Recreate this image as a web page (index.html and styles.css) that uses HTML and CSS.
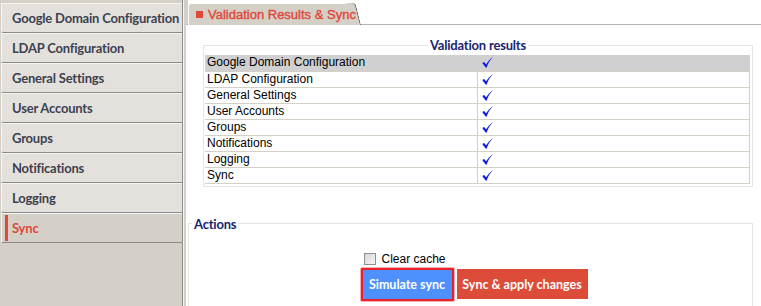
FILE: index.html
```html
<!DOCTYPE html>
<html>
<head>
<meta charset="utf-8">
<link rel="stylesheet" href="styles.css">
</head>
<body>
<div class="app">
  <nav class="sidebar">
    <div class="nav-item">Google Domain Configuration</div>
    <div class="nav-item">LDAP Configuration</div>
    <div class="nav-item">General Settings</div>
    <div class="nav-item">User Accounts</div>
    <div class="nav-item">Groups</div>
    <div class="nav-item">Notifications</div>
    <div class="nav-item">Logging</div>
    <div class="nav-item active">Sync</div>
  </nav>
  <div class="gutter"></div>
  <main class="main">
    <div class="tabstrip">
      <div class="tab"><span class="tab-mark"></span><span class="tab-label">Validation Results &amp; Sync</span></div>
    </div>
    <div class="panel">
      <fieldset class="results">
        <legend>Validation results</legend>
        <table class="results-table">
          <tr class="selected"><td class="name">Google Domain Configuration</td><td class="state"><svg class="check" viewBox="0 0 12 12"><path d="M0.3 6.6 L2.4 5.4 L4.4 8.2 C6.4 4.8 8.6 2.3 11.8 0.2 C8.8 3.3 6.6 6.8 5.1 11.4 L4 11.4 Z"/></svg></td></tr>
          <tr><td class="name">LDAP Configuration</td><td class="state"><svg class="check" viewBox="0 0 12 12"><path d="M0.3 6.6 L2.4 5.4 L4.4 8.2 C6.4 4.8 8.6 2.3 11.8 0.2 C8.8 3.3 6.6 6.8 5.1 11.4 L4 11.4 Z"/></svg></td></tr>
          <tr><td class="name">General Settings</td><td class="state"><svg class="check" viewBox="0 0 12 12"><path d="M0.3 6.6 L2.4 5.4 L4.4 8.2 C6.4 4.8 8.6 2.3 11.8 0.2 C8.8 3.3 6.6 6.8 5.1 11.4 L4 11.4 Z"/></svg></td></tr>
          <tr><td class="name">User Accounts</td><td class="state"><svg class="check" viewBox="0 0 12 12"><path d="M0.3 6.6 L2.4 5.4 L4.4 8.2 C6.4 4.8 8.6 2.3 11.8 0.2 C8.8 3.3 6.6 6.8 5.1 11.4 L4 11.4 Z"/></svg></td></tr>
          <tr><td class="name">Groups</td><td class="state"><svg class="check" viewBox="0 0 12 12"><path d="M0.3 6.6 L2.4 5.4 L4.4 8.2 C6.4 4.8 8.6 2.3 11.8 0.2 C8.8 3.3 6.6 6.8 5.1 11.4 L4 11.4 Z"/></svg></td></tr>
          <tr><td class="name">Notifications</td><td class="state"><svg class="check" viewBox="0 0 12 12"><path d="M0.3 6.6 L2.4 5.4 L4.4 8.2 C6.4 4.8 8.6 2.3 11.8 0.2 C8.8 3.3 6.6 6.8 5.1 11.4 L4 11.4 Z"/></svg></td></tr>
          <tr><td class="name">Logging</td><td class="state"><svg class="check" viewBox="0 0 12 12"><path d="M0.3 6.6 L2.4 5.4 L4.4 8.2 C6.4 4.8 8.6 2.3 11.8 0.2 C8.8 3.3 6.6 6.8 5.1 11.4 L4 11.4 Z"/></svg></td></tr>
          <tr><td class="name">Sync</td><td class="state"><svg class="check" viewBox="0 0 12 12"><path d="M0.3 6.6 L2.4 5.4 L4.4 8.2 C6.4 4.8 8.6 2.3 11.8 0.2 C8.8 3.3 6.6 6.8 5.1 11.4 L4 11.4 Z"/></svg></td></tr>
        </table>
      </fieldset>
      <fieldset class="actions">
        <legend>Actions</legend>
        <div class="action-row">
          <div class="action-box">
            <label class="cb"><span class="box"></span><span class="cb-label">Clear cache</span></label>
            <div class="buttons">
              <button class="btn btn-sim">Simulate sync</button>
              <button class="btn btn-apply">Sync &amp; apply changes</button>
            </div>
          </div>
        </div>
      </fieldset>
    </div>
  </main>
</div>
</body>
</html>
```
FILE: styles.css
```css
html, body {
  margin: 0;
  padding: 0;
  width: 761px;
  height: 306px;
  overflow: hidden;
  background: #ffffff;
}

.app {
  display: flex;
  height: 306px;
}

.sidebar {
  width: 182px;
  flex: none;
  background: #d4d0c8;
  border-right: 1px solid #8e8e8e;
  padding-top: 3px;
  box-sizing: content-box;
}

.nav-item {
  box-sizing: border-box;
  height: 30px;
  margin-left: 1px;
  padding-left: 10px;
  background: #e4e1dc;
  border-top: 1px solid #f6f5f2;
  border-left: 1px solid #f6f5f2;
  border-bottom: 1px solid #8a8a8a;
  border-bottom-left-radius: 3px;
  font-family: Lato, "Open Sans", sans-serif;
  font-weight: 700;
  font-size: 13px;
  letter-spacing: -0.2px;
  line-height: 28px;
  color: #3d4150;
  white-space: nowrap;
  position: relative;
}

.nav-item.active {
  background: #d4d0c8;
  color: #e0483a;
}

.nav-item.active::before {
  content: "";
  position: absolute;
  left: 3px;
  top: 1px;
  width: 3px;
  height: 26px;
  background: #e0483a;
}

.gutter {
  width: 2px;
  flex: none;
  background: #d4d0c8;
  border-left: 1px solid #f6f5f2;
}

.main {
  flex: 1;
  display: flex;
  flex-direction: column;
  background: #ffffff;
  overflow: hidden;
}

.tabstrip {
  height: 24px;
  flex: none;
  border-bottom: 1px solid #b4b4b4;
  display: flex;
  align-items: flex-end;
  background: linear-gradient(to right, #d4d0c8 2px, #ffffff 2px);
}

.tab {
  position: relative;
  margin-left: 2px;
  margin-bottom: -1px;
  height: 22px;
  box-sizing: border-box;
  width: 168px;
  padding-left: 7px;
  display: flex;
  align-items: center;
  background: #d4d0c8;
  border-top: 1px solid #ffffff;
  border-left: 1px solid #ffffff;
  border-top-left-radius: 3px;
}

.tab::after {
  content: "";
  position: absolute;
  top: -1px;
  bottom: 0;
  right: -5px;
  width: 8px;
  background: #d4d0c8;
  border-right: 1px solid #5a5a5a;
  border-top-right-radius: 4px;
  transform: skewX(14deg);
  transform-origin: bottom;
}

.tab-mark {
  width: 7px;
  height: 7px;
  background: #e0483a;
  margin-right: 5px;
  flex: none;
}

.tab-label {
  position: relative;
  z-index: 1;
  font-family: "Liberation Sans", Arial, sans-serif;
  font-size: 13px;
  color: #e0483a;
  white-space: nowrap;
  -webkit-text-stroke: 0.4px #e0483a;
}

.panel {
  flex: 1;
  display: flex;
  flex-direction: column;
}

fieldset {
  border: 1px solid #e4e4e4;
  margin: 0;
  min-width: 0;
}

legend {
  font-family: Lato, "Open Sans", sans-serif;
  font-weight: 700;
  font-size: 13px;
  letter-spacing: -0.2px;
  line-height: 16px;
  color: #1a2470;
  padding: 0 2px;
}

.results {
  flex: none;
  margin: 12px 8px 0 17px;
  padding: 0 1px 2px 1px;
}

.results legend {
  margin: 0 auto;
}

.results-table {
  width: 545px;
  margin-top: 2px;
  border-collapse: collapse;
  border-right: 1px solid #d4d0c8;
  font-family: "Liberation Sans", Arial, sans-serif;
  font-size: 12px;
  color: #000000;
}

.results-table tr {
  height: 16px;
}

.results-table td {
  padding: 0;
  height: 15px;
  line-height: 15px;
  border-bottom: 1px solid #d4d0c8;
  white-space: nowrap;
}

.results-table tr.selected td {
  background: #d0d0d0;
}

.results-table td.name {
  width: 270px;
  padding-left: 2px;
  border-right: 1px solid #d4d0c8;
}

.results-table td.state {
  padding-left: 4px;
}

.check {
  display: block;
  width: 11px;
  height: 11px;
  fill: #0a14e6;
}

.actions {
  flex: none;
  height: 130px;
  margin: 29px 8px 0 2px;
  padding: 0 3px 0 3px;
}

.action-row {
  display: flex;
  justify-content: center;
  padding-left: 7px;
  margin-top: 19px;
}

.action-box {
  display: flex;
  flex-direction: column;
}

.cb {
  display: flex;
  align-items: center;
  height: 16px;
  padding-left: 3px;
  font-family: "Liberation Sans", Arial, sans-serif;
  font-size: 12px;
  color: #000000;
}

.box {
  width: 10px;
  height: 10px;
  border: 1px solid #8f8f8f;
  background: linear-gradient(135deg, #d6d6d6, #f4f4f4);
  margin-right: 6px;
}

.buttons {
  display: flex;
  align-items: center;
  gap: 3px;
  margin-top: 1px;
}

.btn {
  font-family: Lato, "Open Sans", sans-serif;
  font-weight: 700;
  font-size: 12.5px;
  color: #ffffff;
  border: none;
  margin: 0;
  padding: 0;
  white-space: nowrap;
}

.btn-sim {
  width: 93px;
  height: 33px;
  background: #4d90fe;
  border: 2px solid #e8202c;
  border-radius: 1px;
  box-shadow: 0 0 0 1px #f6b0b0;
}

.btn-apply {
  width: 131px;
  height: 30px;
  background: #dd4b39;
}
```
